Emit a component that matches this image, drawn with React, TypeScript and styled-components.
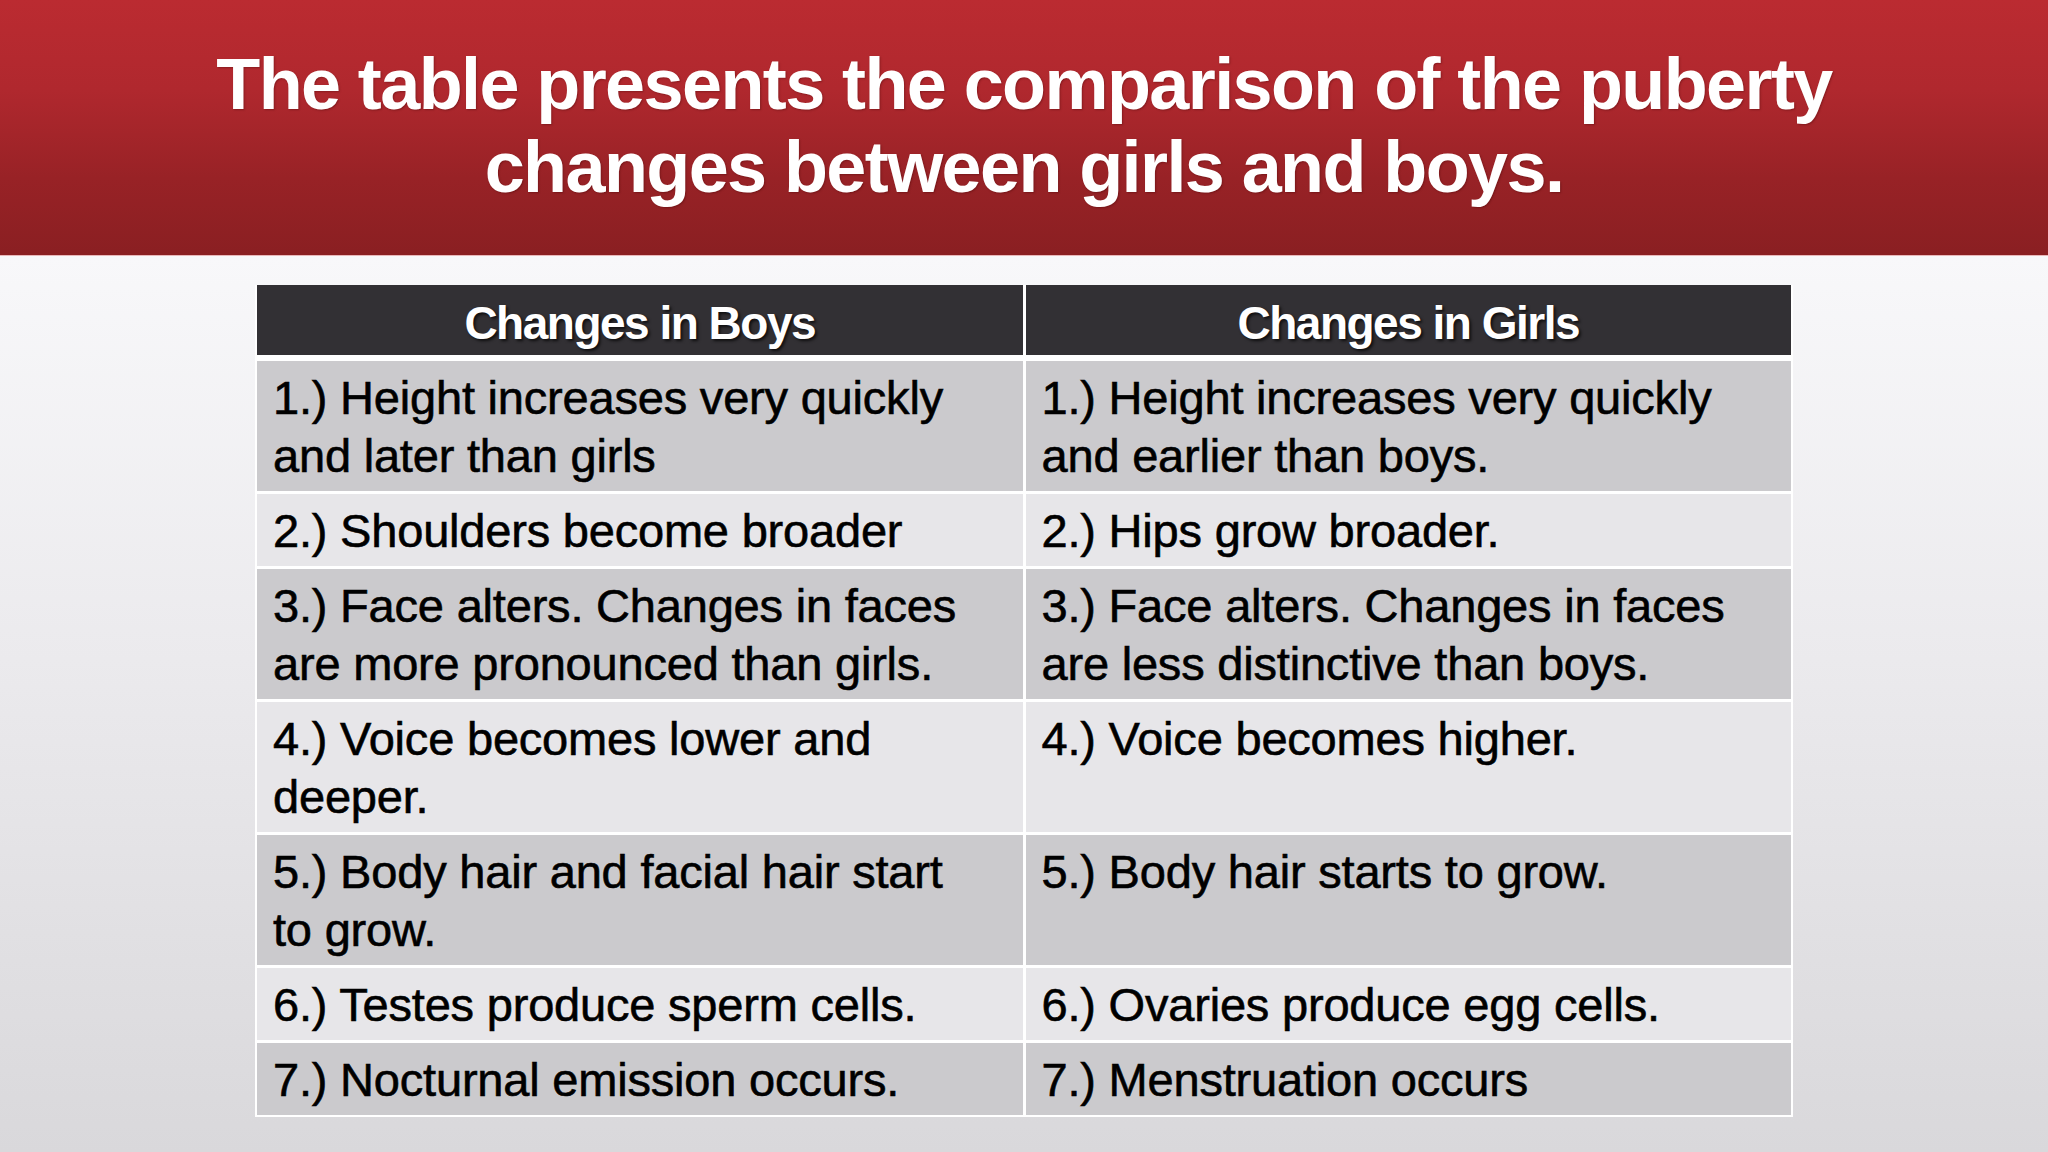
import React from "react";
import styled, { createGlobalStyle } from "styled-components";

const rows = [
  {
    boys: "1.) Height increases very quickly and later than girls",
    girls: "1.) Height increases very quickly and earlier than boys.",
  },
  { boys: "2.) Shoulders become broader", girls: "2.) Hips grow broader." },
  {
    boys: "3.) Face alters. Changes in faces are more pronounced than girls.",
    girls: "3.) Face alters. Changes in faces are less distinctive than boys.",
  },
  {
    boys: "4.) Voice becomes lower and deeper.",
    girls: "4.) Voice becomes higher.",
  },
  {
    boys: "5.) Body hair and facial hair start to grow.",
    girls: "5.) Body hair starts to grow.",
  },
  {
    boys: "6.) Testes produce sperm cells.",
    girls: "6.) Ovaries produce egg cells.",
  },
  {
    boys: "7.) Nocturnal emission occurs.",
    girls: "7.) Menstruation occurs",
  },
];

const App = () => {
  return (
    <>
      <GlobalStyle />
      <Slide>
        <Banner>
          <Title>
            The table presents the comparison of the puberty
            <br />
            changes between girls and boys.
          </Title>
        </Banner>
        <Body>
          <Table>
            <HeadCell>Changes in Boys</HeadCell>
            <HeadCell>Changes in Girls</HeadCell>
            {rows.map((row, i) => (
              <React.Fragment key={i}>
                <Cell $shade={i % 2 === 0}>{row.boys}</Cell>
                <Cell $shade={i % 2 === 0}>{row.girls}</Cell>
              </React.Fragment>
            ))}
          </Table>
        </Body>
      </Slide>
    </>
  );
};

export default App;

const GlobalStyle = createGlobalStyle`
  html, body {
    margin: 0;
    padding: 0;
  }
  body {
    font-family: "Liberation Sans", Arial, sans-serif;
  }
`;

const Slide = styled.div`
  width: 2048px;
  height: 1152px;
  display: flex;
  flex-direction: column;
  overflow: hidden;
`;

const Banner = styled.header`
  height: 256px;
  flex-shrink: 0;
  display: flex;
  align-items: center;
  justify-content: center;
  background: linear-gradient(180deg, #bb2b31 0%, #b0282e 35%, #982226 70%, #8a1f22 100%);
  border-bottom: 1px solid #e9b8ba;
  box-sizing: border-box;
`;

const Title = styled.h1`
  margin: 0;
  padding-bottom: 4px;
  color: #ffffff;
  font-family: "Liberation Sans", Arial, sans-serif;
  font-weight: 700;
  font-size: 72px;
  line-height: 83px;
  letter-spacing: -1.6px;
  text-align: center;
  text-shadow: 1px 1px 2px rgba(60, 0, 0, 0.35);
`;

const Body = styled.main`
  flex: 1;
  background: linear-gradient(180deg, #f8f8fa 0%, #ebeaed 45%, #d9d8db 100%);
  padding-top: 29px;
  padding-left: 255px;
`;

const Table = styled.div`
  width: 1538px;
  box-sizing: border-box;
  display: grid;
  grid-template-columns: 1fr 1fr;
  gap: 3px;
  padding: 0 2px 2px 2px;
  background: #ffffff;
`;

const HeadCell = styled.div`
  height: 70px;
  box-sizing: border-box;
  padding-top: 5px;
  margin-bottom: 3px;
  display: flex;
  align-items: center;
  justify-content: center;
  background: #323034;
  color: #ffffff;
  font-family: "Liberation Sans", Arial, sans-serif;
  font-weight: 700;
  font-size: 46px;
  letter-spacing: -1.5px;
  text-shadow: 2px 2px 3px rgba(0, 0, 0, 0.7);
`;

const Cell = styled.div<{ $shade: boolean }>`
  padding: 8px 40px 6px 16px;
  background: ${(p) => (p.$shade ? "#cbcacd" : "#e7e6e9")};
  color: #000000;
  font-family: "Liberation Sans", Arial, sans-serif;
  font-size: 47px;
  line-height: 58px;
  letter-spacing: -0.2px;
  -webkit-text-stroke: 0.6px #000000;
`;
